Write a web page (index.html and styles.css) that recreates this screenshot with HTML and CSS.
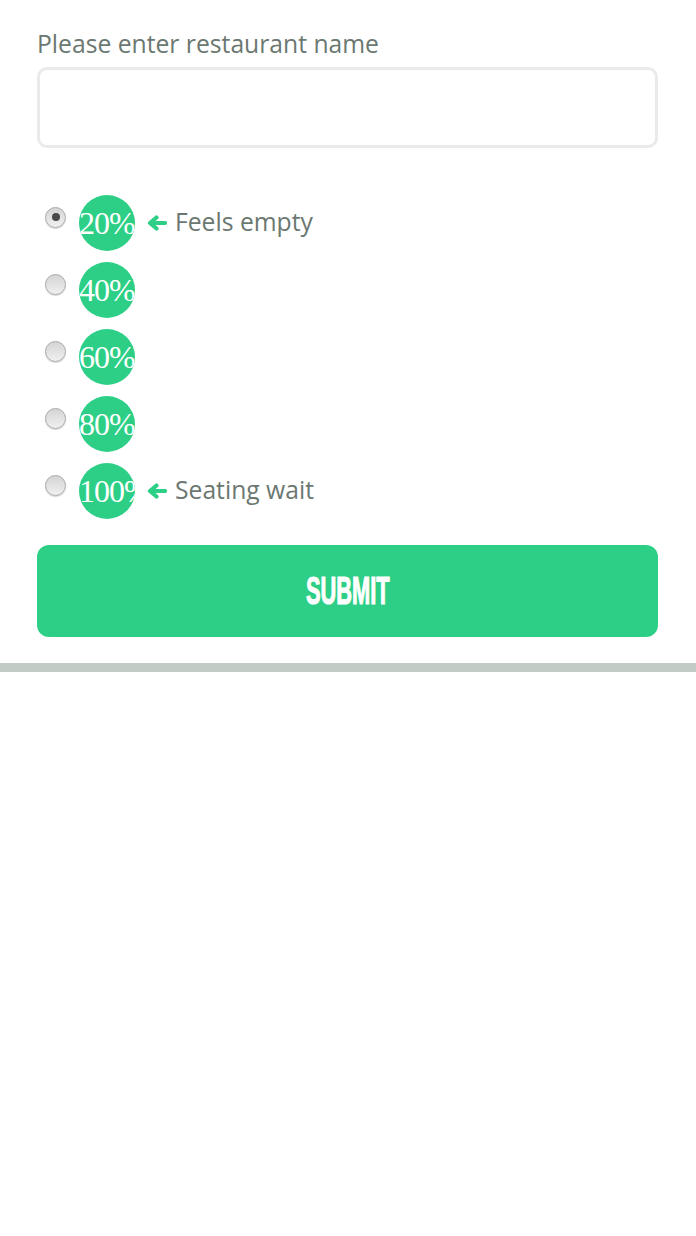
FILE: index.html
```html
<!DOCTYPE html>
<html lang="en">
<head>
	<meta charset="UTF-8">
	<meta name="viewport" content="width=device-width, initial-scale=1.0">
	<title>How busy is it?</title>
	<link rel="stylesheet" href="styles.css">
</head>
<body>
	<form action="" class="container">
		<label for="restaurant" class="label">Please enter restaurant name</label>
		<input type="text" id="restaurant" name="restaurant" class="input">

		<div class="levels">
			<div class="level">
				<input type="radio" name="level" id="level20" class="radio" checked>
				<label for="level20" class="bubble">20%</label>
				<svg class="arrow" viewBox="0 0 20 16" width="20" height="16"><path d="M9.5 2.5L3 8l6.5 5.5M3.5 8H18"/></svg>
				<span class="hint">Feels empty</span>
			</div>
			<div class="level">
				<input type="radio" name="level" id="level40" class="radio">
				<label for="level40" class="bubble">40%</label>
			</div>
			<div class="level">
				<input type="radio" name="level" id="level60" class="radio">
				<label for="level60" class="bubble">60%</label>
			</div>
			<div class="level">
				<input type="radio" name="level" id="level80" class="radio">
				<label for="level80" class="bubble">80%</label>
			</div>
			<div class="level">
				<input type="radio" name="level" id="level100" class="radio">
				<label for="level100" class="bubble">100%</label>
				<svg class="arrow" viewBox="0 0 20 16" width="20" height="16"><path d="M9.5 2.5L3 8l6.5 5.5M3.5 8H18"/></svg>
				<span class="hint">Seating wait</span>
			</div>
		</div>

		<button class="btn"><span>SUBMIT</span></button>
	</form>
	<div class="divider"></div>
</body>
</html>
```

FILE: styles.css
```css
body {
	margin: 0;
	font-family: "Open Sans", "Liberation Sans", sans-serif;
	color: #6b7871;
}
.container {
	padding: 27px 38px 26px 37px;
}
.label {
	display: block;
	font-size: 24.7px;
	margin-bottom: 7px;
}
.input {
	display: block;
	box-sizing: border-box;
	width: 100%; height: 81px;
	border: 3px solid #e9ebea; border-radius: 10px;
	font-size: 20px; padding: 0 14px;
	outline: none;
}
.levels {
	display: flex;
	flex-direction: column;
	gap: 11px;
	margin-top: 47px;
}
.level {
	display: flex;
	align-items: center;
	height: 56px;
}
.radio {
	appearance: none;
	-webkit-appearance: none;
	width: 21px; height: 21px;
	margin: 0 13px 12px 8px;
	border-radius: 50%;
	border: 1px solid #a8a8a8;
	background: linear-gradient(#d4d4d4, #f0f0f0);
	box-shadow: 0 1px 1px rgba(0, 0, 0, 0.18);
	display: flex;
	align-items: center;
	justify-content: center;
}
.radio:checked::before {
	content: "";
	width: 8px; height: 8px;
	border-radius: 50%;
	background: #4a4a4a;
}
.bubble {
	width: 56px; height: 56px;
	border-radius: 50%;
	background-color: #2dcf86;
	color: white;
	font-family: "Liberation Serif", serif;
	font-size: 32px; line-height: 56px;
	letter-spacing: -1px;
	white-space: nowrap;
	overflow: hidden;
}
.arrow {
	margin-left: 12px; margin-right: 8px;
	fill: none;
	stroke: #2dcf86; stroke-width: 4.2;
	stroke-linecap: round; stroke-linejoin: round;
}
.hint {
	font-size: 24.7px;
	margin-bottom: 3px;
}
.btn {
	display: block;
	width: 100%; height: 92px;
	margin-top: 26px;
	border: none; border-radius: 12px;
	background-color: #2dcf86;
	color: white;
	font-family: "Liberation Sans", sans-serif;
	font-weight: bold; font-size: 39px;
}
.btn span {
	display: inline-block;
	transform: scaleX(0.56);
	-webkit-text-stroke: 1.2px white;
}
.divider {
	height: 9px;
	background-color: #c2cbc6;
}
```
